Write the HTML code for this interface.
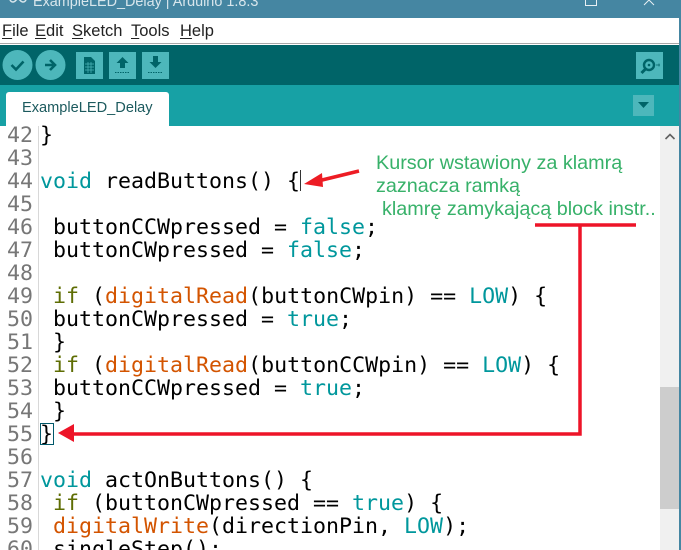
<!DOCTYPE html>
<html><head><meta charset="utf-8">
<style>
html,body{margin:0;padding:0;background:#fff}
#p{position:relative;width:681px;height:550px;overflow:hidden;background:#fff;font-family:"Liberation Sans",sans-serif}
.a{position:absolute}
.m{position:absolute;top:20px;font-size:16.5px;line-height:22px;color:#222;white-space:pre}
.m u{text-decoration:underline;text-underline-offset:2px}
.n,.c{position:absolute;font-family:"DejaVu Sans Mono",monospace;font-size:21.6px;line-height:23px;white-space:pre;height:23px;margin-top:2px}
.n{left:7px;color:#777}
.c{left:40px;color:#000}
.k{color:#00979c}.o{color:#d35400}.f{color:#5e6d03}
.g{position:absolute;color:#37b169;font-size:19.8px;line-height:22px;white-space:pre}
</style></head><body><div id="p">
<div class="a" style="left:0;top:0;width:681px;height:18px;background:#4586a2"></div>
<div class="a" style="left:33px;top:-8px;font-size:14.4px;line-height:20px;color:#d8e6ec;white-space:pre">ExampleLED_Delay | Arduino 1.8.3</div>
<svg class="a" style="left:9px;top:-4px" width="18" height="10"><path d="M4 1a3 3 0 1 0 0 6c2.500 0 3-3 5-3s2.500 3 5 3a3 3 0 1 0 0-6" fill="none" stroke="#d8e6ec" stroke-width="1.500" transform="translate(0,-1)"/></svg>
<div class="a" style="left:585px;top:-6px;width:10px;height:10px;border:1px solid #e8f0f4"></div>
<svg class="a" style="left:643px;top:0" width="14" height="6"><path d="M1 5L6 0L11 5" stroke="#e8f0f4" fill="none"/></svg>

<div class="a" style="left:0;top:18px;width:681px;height:26px;background:#fff"></div>
<div class="m" style="left:2px"><u>F</u>ile</div>
<div class="m" style="left:35px"><u>E</u>dit</div>
<div class="m" style="left:72px"><u>S</u>ketch</div>
<div class="m" style="left:131px"><u>T</u>ools</div>
<div class="m" style="left:180px"><u>H</u>elp</div>
<div class="a" style="left:0;top:43px;width:681px;height:1px;background:#a8a8a8"></div>

<div class="a" style="left:0;top:45px;width:681px;height:40px;background:#006468"></div>
<div class="a" style="left:0;top:85px;width:681px;height:41px;background:#17a1a5"></div>

<svg class="a" style="left:0;top:0;margin-top:45px" width="681" height="40">
<circle cx="17.500" cy="20" r="15" fill="#4db7bb"/>
<circle cx="50.500" cy="20" r="15" fill="#4db7bb"/>
<path d="M11.500 20l4.500 4.500l7.500-8" stroke="#006468" stroke-width="2.600" fill="none"/>
<path d="M45 20h8M50 15l5 5l-5 5" stroke="#006468" stroke-width="2.600" fill="none"/>
<rect x="76" y="7" width="27" height="27" fill="#4db7bb"/>
<path d="M84 12h7l4 4v13h-11z" fill="#006468"/>
<path d="M85 19h9M85 22h9M85 25h9M88 17v11M91 17v11" stroke="#4db7bb" stroke-width=".7"/>
<rect x="109" y="7" width="27" height="27" fill="#4db7bb"/>
<path d="M122.500 12l6 6h-3.500v5h-5v-5h-3.500z" fill="#006468"/>
<path d="M115 27.500h15" stroke="#006468" stroke-width="1" stroke-dasharray="1.500 1"/>
<rect x="142" y="7" width="27" height="27" fill="#4db7bb"/>
<path d="M153 11h5v6h3.500l-6 6l-6-6h3.500z" fill="#006468"/>
<path d="M148 27.500h15" stroke="#006468" stroke-width="1" stroke-dasharray="1.500 1"/>
<rect x="636" y="7" width="27" height="27" fill="#4db7bb"/>
<circle cx="649" cy="20" r="5" fill="none" stroke="#006468" stroke-width="2.400"/>
<circle cx="649" cy="20" r="1.300" fill="#006468"/>
<path d="M645.500 24l-4 4" stroke="#006468" stroke-width="3"/>
<path d="M656 20h4M659 18.500v3" stroke="#006468" stroke-width=".7"/>
</svg>

<div class="a" style="left:6px;top:92px;width:163px;height:34px;background:#fff;border-radius:3px 3px 0 0"></div>
<div class="a" style="left:22px;top:98px;font-size:14.600px;line-height:20px;color:#1c5a5e;white-space:pre">ExampleLED_Delay</div>
<div class="a" style="left:633px;top:95px;width:21px;height:21px;background:#4db7bb"></div>
<svg class="a" style="left:637px;top:101px" width="14" height="9"><path d="M1 1h11l-5.500 6z" fill="#006468"/></svg>

<div class="a" style="left:38px;top:126px;width:1px;height:424px;background:#d8d8d8"></div>
<div class="a" style="left:660px;top:126px;width:19px;height:424px;background:#f0f0f0"></div>
<div class="a" style="left:660px;top:387px;width:19px;height:122px;background:#cdcdcd"></div>
<div class="a" style="left:679px;top:0;width:2px;height:550px;background:#4586a2"></div>
<svg class="a" style="left:664px;top:132px" width="12" height="9"><path d="M1.500 7L6 2.500L10.500 7" stroke="#606060" stroke-width="1.600" fill="none"/></svg>

<div class="n" style="top:122px">42</div><div class="c" style="top:122px">}</div>
<div class="n" style="top:145px">43</div>
<div class="n" style="top:168px">44</div><div class="c" style="top:168px"><span class="k">void</span> readButtons() {</div>
<div class="n" style="top:191px">45</div>
<div class="n" style="top:214px">46</div><div class="c" style="top:214px"> buttonCCWpressed = <span class="k">false</span>;</div>
<div class="n" style="top:237px">47</div><div class="c" style="top:237px"> buttonCWpressed = <span class="k">false</span>;</div>
<div class="n" style="top:260px">48</div>
<div class="n" style="top:283px">49</div><div class="c" style="top:283px"> <span class="f">if</span> (<span class="o">digitalRead</span>(buttonCWpin) == <span class="k">LOW</span>) {</div>
<div class="n" style="top:306px">50</div><div class="c" style="top:306px"> buttonCWpressed = <span class="k">true</span>;</div>
<div class="n" style="top:329px">51</div><div class="c" style="top:329px"> }</div>
<div class="n" style="top:352px">52</div><div class="c" style="top:352px"> <span class="f">if</span> (<span class="o">digitalRead</span>(buttonCCWpin) == <span class="k">LOW</span>) {</div>
<div class="n" style="top:375px">53</div><div class="c" style="top:375px"> buttonCCWpressed = <span class="k">true</span>;</div>
<div class="n" style="top:398px">54</div><div class="c" style="top:398px"> }</div>
<div class="n" style="top:421px">55</div><div class="c" style="top:421px">}</div>
<div class="n" style="top:444px">56</div>
<div class="n" style="top:467px">57</div><div class="c" style="top:467px"><span class="k">void</span> actOnButtons() {</div>
<div class="n" style="top:490px">58</div><div class="c" style="top:490px"> <span class="f">if</span> (buttonCWpressed == <span class="k">true</span>) {</div>
<div class="n" style="top:513px">59</div><div class="c" style="top:513px"> <span class="o">digitalWrite</span>(directionPin, <span class="k">LOW</span>);</div>
<div class="n" style="top:536px">60</div><div class="c" style="top:536px"> singleStep();</div>

<div class="a" style="left:300px;top:170px;width:1px;height:21px;background:#333"></div>
<div class="a" style="left:40px;top:423px;width:12px;height:20px;border:1px solid #00586a"></div>

<svg class="a" style="left:0;top:0" width="681" height="550">
<path d="M318 181L359 171" stroke="#ed1c24" stroke-width="3.500" fill="none"/>
<path d="M304 184L322 173L323 187z" fill="#ed1c24"/>
<path d="M535 225H636M580 225V434H70" stroke="#ed1428" stroke-width="3.500" fill="none"/>
<path d="M58 433L74 424V442z" fill="#ed1428"/>
</svg>

<div class="g" style="left:376px;top:152px">Kursor wstawiony za klamrą</div>
<div class="g" style="left:376px;top:175px">zaznacza ramką</div>
<div class="g" style="left:382px;top:198px">klamrę zamykającą block instr..</div>
</div></body></html>
